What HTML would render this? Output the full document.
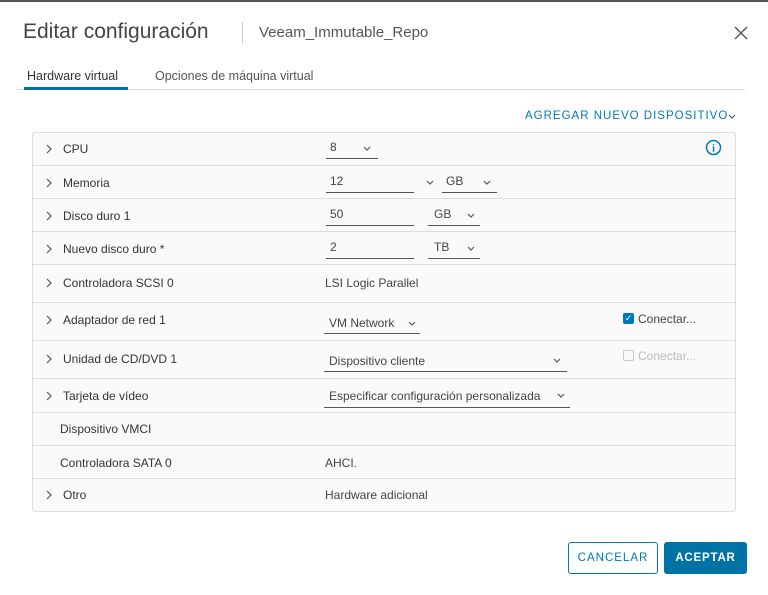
<!DOCTYPE html>
<html><head><meta charset="utf-8"><style>
*{margin:0;padding:0;box-sizing:border-box}
body{width:768px;height:595px;background:#fff;font-family:"Liberation Sans",sans-serif;color:#333;position:relative;overflow:hidden}
.a{position:absolute;white-space:nowrap}
.row{position:absolute;left:33px;width:702px;border-top:1px solid #ddd}
.lbl{position:absolute;left:30px;font-size:12px;color:#333}
.chev{position:absolute;left:13px;width:6px;height:10px}
.ul{position:absolute;border-bottom:1px solid #555;font-size:12px;color:#444}
.dd{position:absolute;width:8px;height:5px}
</style></head><body>
<svg width="0" height="0" style="position:absolute"><defs>
<symbol id="r" viewBox="0 0 6 10"><path d="M1 1l4 4-4 4" fill="none" stroke="#555" stroke-width="1.2"/></symbol>
<symbol id="d" viewBox="0 0 8 5"><path d="M1 1l3 3 3-3" fill="none" stroke="#555" stroke-width="1.2"/></symbol>
</defs></svg>
<div class="a" style="left:0;top:0;width:768px;height:2px;background:#555"></div>
<div class="a" style="left:23px;top:20px;font-size:21px;color:#444">Editar configuración</div>
<div class="a" style="left:242px;top:22px;width:1px;height:22px;background:#ccc"></div>
<div class="a" style="left:259px;top:24px;font-size:15px;color:#555">Veeam_Immutable_Repo</div>
<svg class="a" style="left:734px;top:26px" width="14" height="14"><path d="M1 1l12 12M13 1L1 13" stroke="#555" stroke-width="1.4"/></svg>
<div class="a" style="left:27px;top:69px;font-size:12.5px;color:#333">Hardware virtual</div>
<div class="a" style="left:155px;top:69px;font-size:12.5px;color:#555">Opciones de máquina virtual</div>
<div class="a" style="left:16px;top:89px;width:729px;height:1px;background:#ddd"></div>
<div class="a" style="left:24px;top:87px;width:104px;height:3px;background:#0072a3"></div>
<div class="a" style="left:525px;top:110px;font-size:11.5px;letter-spacing:1px;color:#0079b8">AGREGAR NUEVO DISPOSITIVO</div>
<svg class="a" style="left:728px;top:114px" width="8" height="5"><use href="#d"/></svg>
<div class="a" style="left:32px;top:132px;width:704px;height:380px;border:1px solid #ddd;border-radius:3px;background:#fafafa"></div>

<div class="row" style="top:133px;border-top:none;height:32px"><svg class="chev" style="top:11px"><use href="#r"/></svg><span class="lbl" style="top:9px">CPU</span>
<div class="ul" style="left:293px;top:7px;width:52px;height:19px;padding-left:4px">8</div><svg class="dd" style="left:330px;top:13px"><use href="#d"/></svg>
<svg class="a" style="left:672px;top:6px" width="17" height="17"><circle cx="8.5" cy="8.5" r="7" fill="none" stroke="#0079b8" stroke-width="1.5"/><text x="8.5" y="12.5" font-size="10" font-weight="bold" text-anchor="middle" fill="#0079b8" font-family="Liberation Serif">i</text></svg></div>

<div class="row" style="top:165px;height:33px"><svg class="chev" style="top:12px"><use href="#r"/></svg><span class="lbl" style="top:10px">Memoria</span>
<div class="ul" style="left:293px;top:8px;width:88px;height:19px;padding-left:4px">12</div><svg class="dd" style="left:393px;top:14px"><use href="#d"/></svg>
<div class="ul" style="left:409px;top:8px;width:55px;height:19px;padding-left:4px">GB</div><svg class="dd" style="left:450px;top:14px"><use href="#d"/></svg></div>

<div class="row" style="top:198px;height:33px"><svg class="chev" style="top:12px"><use href="#r"/></svg><span class="lbl" style="top:10px">Disco duro 1</span>
<div class="ul" style="left:293px;top:8px;width:88px;height:19px;padding-left:4px">50</div>
<div class="ul" style="left:395px;top:8px;width:52px;height:19px;padding-left:6px">GB</div><svg class="dd" style="left:434px;top:14px"><use href="#d"/></svg></div>

<div class="row" style="top:231px;height:33px"><svg class="chev" style="top:12px"><use href="#r"/></svg><span class="lbl" style="top:10px">Nuevo disco duro *</span>
<div class="ul" style="left:293px;top:8px;width:88px;height:19px;padding-left:4px">2</div>
<div class="ul" style="left:395px;top:8px;width:52px;height:19px;padding-left:6px">TB</div><svg class="dd" style="left:434px;top:14px"><use href="#d"/></svg></div>

<div class="row" style="top:264px;height:38px"><svg class="chev" style="top:13px"><use href="#r"/></svg><span class="lbl" style="top:11px">Controladora SCSI 0</span>
<span class="a" style="left:292px;top:11px;font-size:12px;color:#444">LSI Logic Parallel</span></div>

<div class="row" style="top:302px;height:38px"><svg class="chev" style="top:12px"><use href="#r"/></svg><span class="lbl" style="top:10px">Adaptador de red 1</span>
<div class="ul" style="left:291px;top:10px;width:96px;height:21px;padding-left:5px;padding-top:3px">VM Network</div><svg class="dd" style="left:375px;top:18px"><use href="#d"/></svg>
<div class="a" style="left:590px;top:10px;width:11px;height:11px;background:#0079b8;border-radius:2px;color:#fff;font-size:9px;line-height:11px;text-align:center">✓</div>
<span class="a" style="left:605px;top:9px;font-size:12px;color:#444">Conectar...</span></div>

<div class="row" style="top:340px;height:38px"><svg class="chev" style="top:13px"><use href="#r"/></svg><span class="lbl" style="top:11px">Unidad de CD/DVD 1</span>
<div class="ul" style="left:291px;top:8px;width:243px;height:23px;padding-left:5px;padding-top:5px">Dispositivo cliente</div><svg class="dd" style="left:520px;top:17px"><use href="#d"/></svg>
<div class="a" style="left:590px;top:9px;width:11px;height:11px;border:1px solid #ccc;border-radius:2px"></div>
<span class="a" style="left:605px;top:8px;font-size:12px;color:#bbb">Conectar...</span></div>

<div class="row" style="top:378px;height:34px"><svg class="chev" style="top:12px"><use href="#r"/></svg><span class="lbl" style="top:10px">Tarjeta de vídeo</span>
<div class="ul" style="left:291px;top:5px;width:246px;height:24px;padding-left:5px;padding-top:5px">Especificar configuración personalizada</div><svg class="dd" style="left:524px;top:14px"><use href="#d"/></svg></div>

<div class="row" style="top:412px;height:33px"><span class="lbl" style="top:9px;left:27px">Dispositivo VMCI</span></div>
<div class="row" style="top:445px;height:33px"><span class="lbl" style="top:10px;left:27px">Controladora SATA 0</span>
<span class="a" style="left:292px;top:10px;font-size:12px;color:#444">AHCI.</span></div>
<div class="row" style="top:478px;height:33px"><svg class="chev" style="top:11px"><use href="#r"/></svg><span class="lbl" style="top:9px">Otro</span>
<span class="a" style="left:292px;top:9px;font-size:12px;color:#444">Hardware adicional</span></div>

<div class="a" style="left:568px;top:542px;width:90px;height:32px;border:1px solid #0079b8;border-radius:3px;color:#0079b8;font-size:11.5px;letter-spacing:1px;text-align:center;line-height:30px">CANCELAR</div>
<div class="a" style="left:664px;top:542px;width:83px;height:32px;background:#0072a3;border-radius:3px;color:#fff;font-size:11.5px;font-weight:bold;letter-spacing:0.8px;text-align:center;line-height:32px">ACEPTAR</div>
</body></html>
